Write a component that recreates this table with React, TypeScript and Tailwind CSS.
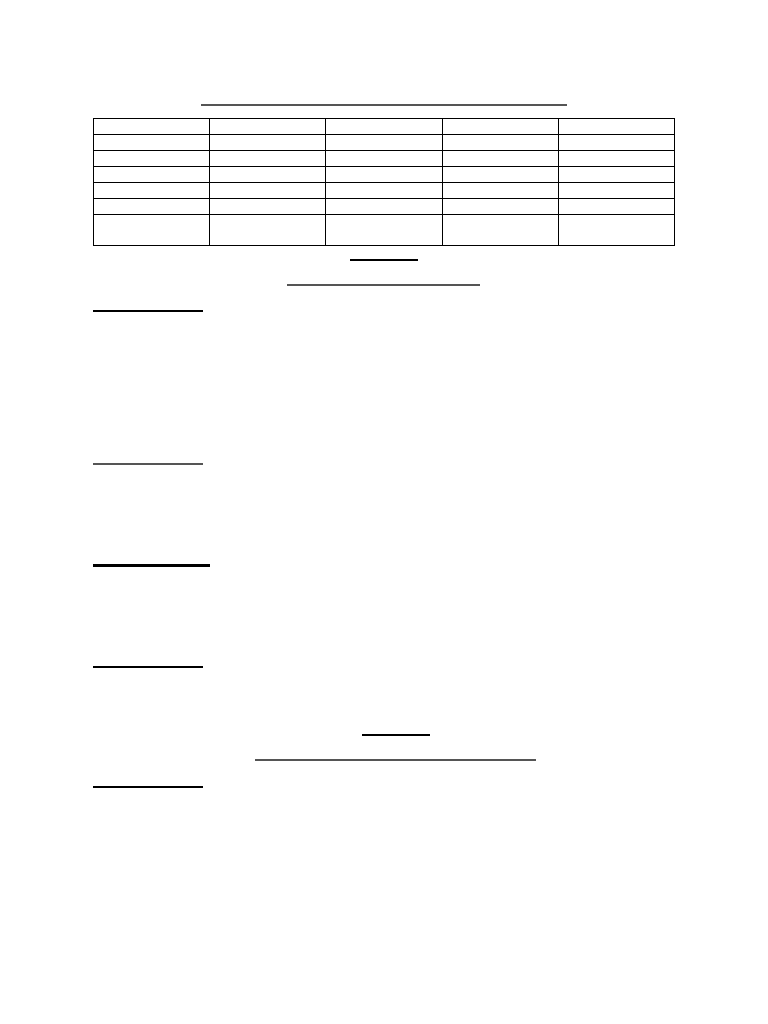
const ROWS = [16, 16, 16, 16, 16, 16, 31];
const COLS = 5;

function Rule({ className }: { className: string }) {
  return <div className={`h-[2px] ${className}`} />;
}

export default function App() {
  return (
    <div className="min-h-[1024px] w-[768px] bg-white font-['Liberation_Sans',Arial,sans-serif]">
      <div className="pl-[93px] pr-[93px] pt-[104px] pb-[200px]">
        <Rule className="ml-[108px] w-[366px] bg-[#555]" />

        <table className="mt-[12px] w-[582px] border-collapse border-[1.5px] border-black table-fixed">
          <tbody>
            {ROWS.map((h, r) => (
              <tr key={r} style={{ height: h }}>
                {Array.from({ length: COLS }).map((_, c) => (
                  <td key={c} className="border-[1.5px] border-black p-0" />
                ))}
              </tr>
            ))}
          </tbody>
        </table>

        <Rule className="mt-[13px] ml-[257px] w-[68px] bg-black" />
        <Rule className="mt-[23px] ml-[194px] w-[193px] bg-[#555]" />
        <Rule className="mt-[24px] w-[110px] bg-black" />
        <Rule className="mt-[151px] w-[110px] bg-[#555]" />
        <Rule className="mt-[99px] w-[117px] h-[3px] bg-black" />
        <Rule className="mt-[99px] w-[110px] bg-black" />
        <Rule className="mt-[66px] ml-[269px] w-[68px] bg-black" />
        <Rule className="mt-[23px] ml-[162px] w-[281px] bg-[#555]" />
        <Rule className="mt-[25px] w-[110px] bg-black" />
      </div>
    </div>
  );
}
